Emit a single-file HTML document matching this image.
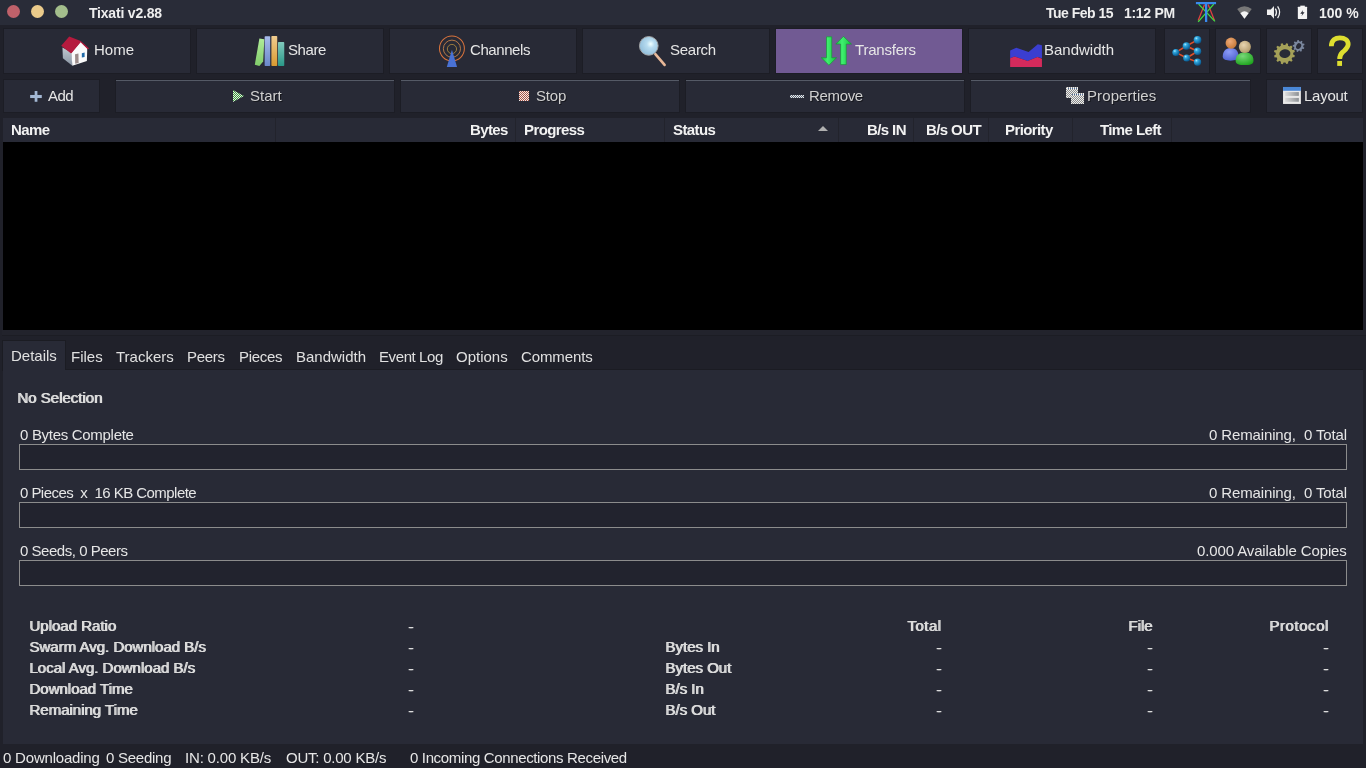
<!DOCTYPE html>
<html><head><meta charset="utf-8">
<style>
*{margin:0;padding:0;box-sizing:border-box}
html,body{width:1366px;height:768px;overflow:hidden;background:#20212a;font-family:"Liberation Sans",sans-serif;color:#e6e6e6}
.a{position:absolute}
.t,.ht,.tab,.st{will-change:transform}
.t{position:absolute;white-space:pre;font-size:15px;line-height:15px}
#title{left:0;top:0;width:1366px;height:25px;background:#292c38}
.btn{position:absolute;background:#282a36;box-shadow:0 0 0 1px #1c1d25}
.btn2{position:absolute;background:#282a36;box-shadow:0 0 0 1px #1c1d25;border-top:1px solid #555a66}
.sel{background:#715a93}
.hdr{position:absolute;left:3px;top:118px;width:1360px;height:24px;background:#282a36}
.sep{position:absolute;top:118px;width:1px;height:24px;background:#22232c}
.ht{position:absolute;top:122px;font-size:15px;line-height:15px;font-weight:bold;color:#f2f2f2;letter-spacing:-0.6px;white-space:pre}
#list{left:3px;top:142px;width:1360px;height:188px;background:#000}
#tabs{left:3px;top:341px;width:1360px;height:29px}
.tab{position:absolute;top:349px;font-size:15px;line-height:15px;color:#e0e0e0;white-space:pre}
#panel{left:3px;top:370px;width:1360px;height:374px;background:#282a36}
.bar{position:absolute;left:19px;width:1328px;height:26px;background:#22232e;border:1px solid #8c8c8c}
.fb{text-shadow:1px 0 0 currentColor;color:#dcdcdc}
.dis{color:#d0d0d0;text-shadow:1px 1px 0 #16171d}
.st{position:absolute;top:750px;font-size:15px;line-height:15px;color:#e6e6e6;white-space:pre}
</style></head><body>
<div id="title" class="a"></div>
<!-- traffic lights -->
<div class="a" style="left:7.4px;top:5.3px;width:13px;height:13px;border-radius:50%;background:#bf616a"></div>
<div class="a" style="left:31.2px;top:5.3px;width:13px;height:13px;border-radius:50%;background:#ebcb8b"></div>
<div class="a" style="left:55.4px;top:5.3px;width:13px;height:13px;border-radius:50%;background:#a3be8c"></div>
<div class="t" style="left:89px;top:6px;font-size:14px;font-weight:bold;letter-spacing:-0.2px;color:#eeeeee">Tixati v2.88</div>
<div class="t" style="left:1046px;top:6px;font-size:14px;font-weight:bold;letter-spacing:-0.5px;color:#eeeeee">Tue Feb 15</div>
<div class="t" style="left:1124px;top:6px;font-size:14px;font-weight:bold;letter-spacing:-0.3px;color:#eeeeee">1:12 PM</div>
<div class="t" style="left:1319px;top:6px;font-size:14px;font-weight:bold;color:#eeeeee">100 %</div>

<!-- row 1 -->
<div class="btn" style="left:4px;top:29px;width:186px;height:44px"></div>
<div class="btn" style="left:197px;top:29px;width:186px;height:44px"></div>
<div class="btn" style="left:390px;top:29px;width:186px;height:44px"></div>
<div class="btn" style="left:583px;top:29px;width:186px;height:44px"></div>
<div class="btn sel" style="left:776px;top:29px;width:186px;height:44px"></div>
<div class="btn" style="left:969px;top:29px;width:186px;height:44px"></div>
<div class="btn" style="left:1165px;top:29px;width:44px;height:44px"></div>
<div class="btn" style="left:1216px;top:29px;width:44px;height:44px"></div>
<div class="btn" style="left:1267px;top:29px;width:44px;height:44px"></div>
<div class="btn" style="left:1318px;top:29px;width:44px;height:44px"></div>
<div class="t" style="left:94px;top:42px">Home</div>
<div class="t" style="left:288px;top:42px;letter-spacing:-0.4px">Share</div>
<div class="t" style="left:470px;top:42px;letter-spacing:-0.42px">Channels</div>
<div class="t" style="left:670px;top:42px;letter-spacing:-0.27px">Search</div>
<div class="t" style="left:855px;top:42px;letter-spacing:-0.22px">Transfers</div>
<div class="t" style="left:1044px;top:42px">Bandwidth</div>

<!-- row 2 -->
<div class="btn" style="left:4px;top:80px;width:95px;height:32px"></div>
<div class="btn2" style="left:116px;top:80px;width:278px;height:32px"></div>
<div class="btn2" style="left:401px;top:80px;width:278px;height:32px"></div>
<div class="btn2" style="left:686px;top:80px;width:278px;height:32px"></div>
<div class="btn2" style="left:971px;top:80px;width:279px;height:32px"></div>
<div class="btn" style="left:1267px;top:80px;width:95px;height:32px"></div>
<div class="t" style="left:48px;top:88px;letter-spacing:-0.5px">Add</div>
<div class="t dis" style="left:250px;top:88px">Start</div>
<div class="t dis" style="left:536px;top:88px;letter-spacing:-0.2px">Stop</div>
<div class="t dis" style="left:809px;top:88px;letter-spacing:-0.33px">Remove</div>
<div class="t dis" style="left:1087px;top:88px;letter-spacing:0.1px">Properties</div>
<div class="t" style="left:1304px;top:88px;letter-spacing:-0.25px">Layout</div>

<svg class="a" style="left:56px;top:32px;width:84px;height:40px" viewBox="0 0 1366 650">
<defs><linearGradient id="hw" x1="0" y1="0" x2="0" y2="1"><stop offset="0" stop-color="#c0c8d0"/><stop offset="1" stop-color="#8a96a4"/></linearGradient></defs>
<polygon points="105,250 255,335 265,548 112,428" fill="url(#hw)"/>
<polygon points="250,335 400,160 508,265 502,472 265,548" fill="#fafafa"/>
<polygon points="85,222 215,72 402,148 540,268 515,280 400,168 255,340 240,345" fill="#b51a3e"/>
<polygon points="310,362 365,350 368,505 312,518" fill="#9c8c8a"/>
<polygon points="420,345 465,335 465,405 420,415" fill="#1f6aa8"/>
</svg>
<svg class="a" style="left:250px;top:32px;width:80px;height:40px" viewBox="0 0 1366 683">
<defs>
<linearGradient id="bg" x1="0" y1="0" x2="0" y2="1"><stop offset="0" stop-color="#b0ec98"/><stop offset="1" stop-color="#80cc6a"/></linearGradient>
<linearGradient id="bb" x1="0" y1="0" x2="0" y2="1"><stop offset="0" stop-color="#a8bcec"/><stop offset="1" stop-color="#6a88c8"/></linearGradient>
<linearGradient id="bo" x1="0" y1="0" x2="0" y2="1"><stop offset="0" stop-color="#f0cc90"/><stop offset="1" stop-color="#d89a30"/></linearGradient>
<linearGradient id="bt" x1="0" y1="0" x2="0" y2="1"><stop offset="0" stop-color="#80c8bc"/><stop offset="1" stop-color="#2a9888"/></linearGradient>
</defs>
<polygon points="160,112 245,125 225,505 160,580 82,560" fill="url(#bg)"/>
<rect x="250" y="72" width="95" height="508" rx="12" fill="url(#bb)"/>
<rect x="365" y="68" width="100" height="512" rx="12" fill="url(#bo)"/>
<rect x="478" y="172" width="107" height="408" rx="12" fill="url(#bt)"/>
</svg>
<svg class="a" style="left:434px;top:32px;width:100px;height:40px" viewBox="0 0 1366 546">
<circle cx="245" cy="225" r="170" fill="none" stroke="#d9733c" stroke-width="14"/>
<circle cx="245" cy="228" r="117" fill="none" stroke="#c8844a" stroke-width="12"/>
<circle cx="245" cy="232" r="63" fill="none" stroke="#b89040" stroke-width="11"/>
<polygon points="245,242 175,478 315,478" fill="#4a72d4"/>
</svg>
<svg class="a" style="left:630px;top:32px;width:90px;height:40px" viewBox="0 0 1366 607">
<defs><radialGradient id="mg" cx="0.6" cy="0.4" r="0.6"><stop offset="0" stop-color="#f0ffff"/><stop offset="0.35" stop-color="#b8dcf0"/><stop offset="1" stop-color="#94c0dc"/></radialGradient></defs>
<line x1="385" y1="335" x2="525" y2="500" stroke="#e8b898" stroke-width="40" stroke-linecap="round"/>
<circle cx="285" cy="210" r="142" fill="url(#mg)" stroke="#a4a4a4" stroke-width="14"/>
</svg>
<svg class="a" style="left:812px;top:32px;width:110px;height:40px" viewBox="0 0 1366 497">
<defs><linearGradient id="ag" x1="0" y1="0" x2="1" y2="0"><stop offset="0" stop-color="#18c040"/><stop offset="0.4" stop-color="#40f070"/><stop offset="1" stop-color="#14c03c"/></linearGradient></defs>
<polygon points="180,60 245,60 245,320 305,320 210,412 115,320 180,320" fill="url(#ag)" stroke="#129a30" stroke-width="8" stroke-linejoin="round"/>
<polygon points="390,55 490,150 425,150 425,405 355,405 355,150 295,150" fill="url(#ag)" stroke="#129a30" stroke-width="8" stroke-linejoin="round"/>
</svg>
<svg class="a" style="left:1004px;top:32px;width:120px;height:40px" viewBox="0 0 1366 455">
<polygon points="70,210 140,178 280,228 385,138 432,152 432,300 380,283 270,330 120,278 70,300" fill="#3a3ed0"/>
<polygon points="70,300 120,278 270,330 380,283 432,305 432,397 70,397" fill="#d42a5c"/>
</svg>
<svg class="a" style="left:1165px;top:29px;width:45px;height:45px" viewBox="0 0 768 768"><defs><radialGradient id="ng" cx="0.35" cy="0.3" r="0.7"><stop offset="0" stop-color="#a8ecff"/><stop offset="0.3" stop-color="#30a8e0"/><stop offset="1" stop-color="#0a5a90"/></radialGradient></defs><line x1="185" y1="400" x2="365" y2="290" stroke="#e0502a" stroke-width="26"/><line x1="185" y1="400" x2="370" y2="495" stroke="#e0502a" stroke-width="26"/><line x1="365" y1="290" x2="555" y2="185" stroke="#e0502a" stroke-width="26"/><line x1="365" y1="290" x2="555" y2="380" stroke="#e0502a" stroke-width="26"/><line x1="370" y1="495" x2="555" y2="380" stroke="#e0502a" stroke-width="26"/><line x1="370" y1="495" x2="555" y2="565" stroke="#e0502a" stroke-width="26"/><circle cx="185" cy="400" r="60" fill="url(#ng)"/><circle cx="365" cy="290" r="64" fill="url(#ng)"/><circle cx="370" cy="495" r="60" fill="url(#ng)"/><circle cx="555" cy="185" r="66" fill="url(#ng)"/><circle cx="555" cy="380" r="63" fill="url(#ng)"/><circle cx="555" cy="565" r="63" fill="url(#ng)"/></svg>
<svg class="a" style="left:1216px;top:29px;width:45px;height:45px" viewBox="0 0 768 768">
<defs>
<radialGradient id="u1" cx="0.4" cy="0.35" r="0.7"><stop offset="0" stop-color="#eeaa78"/><stop offset="1" stop-color="#c47634"/></radialGradient>
<radialGradient id="u2" cx="0.4" cy="0.3" r="0.8"><stop offset="0" stop-color="#8c9cf8"/><stop offset="1" stop-color="#4a5ccc"/></radialGradient>
<radialGradient id="u3" cx="0.4" cy="0.35" r="0.7"><stop offset="0" stop-color="#e8d4b0"/><stop offset="1" stop-color="#b09868"/></radialGradient>
<radialGradient id="u4" cx="0.4" cy="0.3" r="0.8"><stop offset="0" stop-color="#78d878"/><stop offset="1" stop-color="#18a018"/></radialGradient>
</defs>
<path d="M115,470 C115,360 190,325 250,325 C320,325 385,360 385,470 C385,520 330,540 250,540 C170,540 115,520 115,470Z" fill="url(#u2)"/>
<circle cx="258" cy="240" r="95" fill="url(#u1)"/>
<path d="M335,540 C335,440 420,398 490,398 C570,398 640,440 640,540 C640,600 580,615 490,615 C400,615 335,600 335,540Z" fill="url(#u4)"/>
<circle cx="493" cy="305" r="103" fill="url(#u3)"/>
</svg>
<svg class="a" style="left:1267px;top:29px;width:45px;height:45px" viewBox="0 0 768 768"><polygon points="618.4,305.9 637.9,318.6 627.7,342.0 605.2,336.4 589.8,352.6 596.7,374.8 573.8,386.2 560.1,367.4 538.0,370.0 528.9,391.4 504.0,385.4 505.6,362.2 487.0,350.0 466.3,360.5 451.1,340.0 467.2,323.2 460.9,301.9 438.2,296.7 439.8,271.1 462.9,268.7 471.8,248.2 457.8,229.7 475.3,211.1 494.6,224.1 514.6,214.2 515.8,190.9 541.2,188.0 547.6,210.4 569.3,215.5 585.1,198.5 606.5,212.6 597.0,233.9 610.3,251.8 633.4,248.9 640.6,273.4 619.7,283.7" fill="#7a879e"/><ellipse cx="540" cy="292" rx="40" ry="52" transform="rotate(30 540 292)" fill="#282a36"/><polygon points="447.3,437.0 475.6,451.2 467.0,483.9 435.3,482.4 419.8,509.6 437.2,536.1 413.4,560.1 386.7,542.9 359.7,558.7 361.5,590.4 328.9,599.3 314.4,571.1 283.0,571.3 268.8,599.6 236.1,591.0 237.6,559.3 210.4,543.8 183.9,561.2 159.9,537.4 177.1,510.7 161.3,483.7 129.6,485.5 120.7,452.9 148.9,438.4 148.7,407.0 120.4,392.8 129.0,360.1 160.7,361.6 176.2,334.4 158.8,307.9 182.6,283.9 209.3,301.1 236.3,285.3 234.5,253.6 267.1,244.7 281.6,272.9 313.0,272.7 327.2,244.4 359.9,253.0 358.4,284.7 385.6,300.2 412.1,282.8 436.1,306.6 418.9,333.3 434.7,360.3 466.4,358.5 475.3,391.1 447.1,405.6" fill="#a4a058"/><ellipse cx="305" cy="420" rx="95" ry="74" transform="rotate(-10 305 420)" fill="#282a36"/></svg>
<svg class="a" style="left:1318px;top:29px;width:45px;height:45px" viewBox="0 0 768 768">
<path d="M228,295 C228,185 300,150 372,150 C460,150 515,200 515,262 C515,330 455,362 418,398 C385,430 370,450 370,512" fill="none" stroke="#dede30" stroke-width="82"/>
<rect x="328" y="545" width="82" height="85" fill="#dede30"/>
</svg>
<svg class="a" style="left:24px;top:82px;width:60px;height:28px" viewBox="0 0 1366 637">
<rect x="140" y="295" width="265" height="70" fill="#a4b8d4"/>
<rect x="243" y="205" width="62" height="245" fill="#a4b8d4"/>
</svg>
<svg class="a" style="left:1276px;top:82px;width:80px;height:28px" viewBox="0 0 1366 478">
<defs><linearGradient id="lg" x1="0" y1="0" x2="1" y2="0"><stop offset="0" stop-color="#dcdcdc"/><stop offset="1" stop-color="#8c9094"/></linearGradient></defs>
<rect x="120" y="85" width="305" height="290" fill="#e8e8e8"/>
<rect x="120" y="85" width="305" height="65" fill="#4a88d8"/>
<rect x="155" y="172" width="235" height="65" fill="url(#lg)"/>
<rect x="155" y="272" width="235" height="65" fill="url(#lg)"/>
</svg>
<svg class="a" style="left:1190px;top:0px;width:124px;height:26px" viewBox="0 0 1366 286">
<line x1="90" y1="225" x2="160" y2="50" stroke="#e04040" stroke-width="14"/>
<line x1="200" y1="50" x2="270" y2="225" stroke="#e04040" stroke-width="14"/>
<line x1="90" y1="240" x2="262" y2="45" stroke="#40e040" stroke-width="14"/>
<line x1="95" y1="45" x2="275" y2="235" stroke="#40e040" stroke-width="14"/>
<rect x="65" y="22" width="222" height="24" fill="#3a8cf0"/>
<rect x="165" y="40" width="25" height="202" fill="#3a8cf0"/>
<path d="M520,100 Q600,40 680,100 L600,205 Z" fill="#777"/>
<path d="M555,145 Q600,105 645,145 L600,205 Z" fill="#f4f4f4"/>
<polygon points="848,105 890,105 925,65 925,205 890,165 848,165" fill="#f0f0f0"/>
<path d="M940,95 Q965,135 940,175" fill="none" stroke="#f0f0f0" stroke-width="16"/>
<path d="M965,70 Q1010,135 965,200" fill="none" stroke="#f0f0f0" stroke-width="14"/>
<rect x="1188" y="75" width="102" height="133" rx="6" fill="#f4f4f4"/>
<rect x="1215" y="62" width="50" height="16" fill="#f4f4f4"/>
<polygon points="1245,110 1215,150 1238,150 1228,180 1262,135 1240,135" fill="#282a35"/>
</svg>
<div class="a" style="left:233px;top:90px;width:11px;height:12px;clip-path:polygon(0 0,100% 50%,0 100%);background:repeating-conic-gradient(#e4ece4 0 25%,#3c9c3c 0 50%) 0 0/2px 2px"></div>
<div class="a" style="left:519px;top:91px;width:10px;height:10px;background:repeating-conic-gradient(#f0ecec 0 25%,#a85444 0 50%) 0 0/2px 2px"></div>
<div class="a" style="left:790px;top:95px;width:14px;height:3px;background:repeating-conic-gradient(#e8e8e8 0 25%,#5a6676 0 50%) 0 0/2px 2px"></div>
<div class="a" style="left:1066px;top:87px;width:12px;height:11px;background:repeating-conic-gradient(#eeeeee 0 25%,#8c8c8c 0 50%) 0 0/2px 2px"></div>
<div class="a" style="left:1071px;top:93px;width:13px;height:11px;background:repeating-conic-gradient(#eeeeee 0 25%,#8c8c8c 0 50%) 1px 0/2px 2px"></div>
<div class="a" style="left:1067px;top:88px;width:11px;height:1px;background:repeating-conic-gradient(#eeeeee 0 25%,#4a6a98 0 50%) 1px 0/2px 2px"></div>
<div class="a" style="left:1072px;top:94px;width:12px;height:1px;background:repeating-conic-gradient(#eeeeee 0 25%,#4a6a98 0 50%) 0 0/2px 2px"></div>
<!-- header -->
<div class="hdr"></div>
<div class="sep" style="left:275px"></div>
<div class="sep" style="left:515px"></div>
<div class="sep" style="left:664px"></div>
<div class="sep" style="left:838px"></div>
<div class="sep" style="left:913px"></div>
<div class="sep" style="left:988px"></div>
<div class="sep" style="left:1072px"></div>
<div class="sep" style="left:1171px"></div>
<div class="ht" style="left:11px">Name</div>
<div class="ht" style="left:470px">Bytes</div>
<div class="ht" style="left:524px">Progress</div>
<div class="ht" style="left:673px">Status</div>
<div class="ht" style="left:867px">B/s IN</div>
<div class="ht" style="left:926px">B/s OUT</div>
<div class="ht" style="left:1005px">Priority</div>
<div class="ht" style="left:1100px">Time Left</div>
<div class="a" style="left:818px;top:126px;width:0;height:0;border-left:5px solid transparent;border-right:5px solid transparent;border-bottom:5px solid #b0b0b0"></div>

<div id="list" class="a"></div>
<div class="a" style="left:2px;top:330px;width:1364px;height:5px;background:#22232c"></div><div class="a" style="left:2px;top:335px;width:1364px;height:1px;background:#1c1d24"></div>

<!-- tabs -->
<div class="a" style="left:65px;top:369px;width:1298px;height:1px;background:#1b1c23"></div>
<div class="a" style="left:3px;top:341px;width:62px;height:29px;background:#282a36;box-shadow:0 0 0 1px #1b1c23"></div>
<div class="tab" style="left:11px;top:348px">Details</div>
<div class="tab" style="left:71px">Files</div>
<div class="tab" style="left:116px">Trackers</div>
<div class="tab" style="left:187px;letter-spacing:-0.28px">Peers</div>
<div class="tab" style="left:239px;letter-spacing:-0.3px">Pieces</div>
<div class="tab" style="left:296px">Bandwidth</div>
<div class="tab" style="left:379px;letter-spacing:-0.4px">Event Log</div>
<div class="tab" style="left:456px">Options</div>
<div class="tab" style="left:521px;letter-spacing:-0.1px">Comments</div>

<div id="panel" class="a"></div>
<div class="t fb" style="left:17px;top:390px">No Selection</div>
<div class="t" style="left:20px;top:427px;letter-spacing:-0.3px">0 Bytes Complete</div>
<div class="t" style="right:19px;top:427px;text-align:right;letter-spacing:-0.13px">0 Remaining,  0 Total</div>
<div class="bar" style="top:444px"></div>
<div class="t" style="left:20px;top:485px;letter-spacing:-0.55px">0 Pieces  x  16 KB Complete</div>
<div class="t" style="right:19px;top:485px;text-align:right;letter-spacing:-0.13px">0 Remaining,  0 Total</div>
<div class="bar" style="top:502px"></div>
<div class="t" style="left:20px;top:543px;letter-spacing:-0.47px">0 Seeds, 0 Peers</div>
<div class="t" style="right:19px;top:543px;text-align:right;letter-spacing:-0.12px">0.000 Available Copies</div>
<div class="bar" style="top:560px"></div>

<div class="t fb" style="left:29px;top:618px">Upload Ratio</div>
<div class="t fb" style="left:29px;top:639px">Swarm Avg. Download B/s</div>
<div class="t fb" style="left:29px;top:660px">Local Avg. Download B/s</div>
<div class="t fb" style="left:29px;top:681px">Download Time</div>
<div class="t fb" style="left:29px;top:702px">Remaining Time</div>

<div class="t fb" style="left:408px;top:619px">-</div>
<div class="t fb" style="left:408px;top:640px">-</div>
<div class="t fb" style="left:408px;top:661px">-</div>
<div class="t fb" style="left:408px;top:682px">-</div>
<div class="t fb" style="left:408px;top:703px">-</div>
<div class="t fb" style="left:665px;top:639px">Bytes In</div>
<div class="t fb" style="left:665px;top:660px">Bytes Out</div>
<div class="t fb" style="left:665px;top:681px">B/s In</div>
<div class="t fb" style="left:665px;top:702px">B/s Out</div>
<div class="t fb" style="right:425px;top:618px;letter-spacing:0.5px">Total</div>
<div class="t fb" style="right:214px;top:618px">File</div>
<div class="t fb" style="right:38px;top:618px;letter-spacing:0.55px">Protocol</div>
<div class="t fb" style="right:425px;top:640px">-</div>
<div class="t fb" style="right:214px;top:640px">-</div>
<div class="t fb" style="right:38px;top:640px">-</div>
<div class="t fb" style="right:425px;top:661px">-</div>
<div class="t fb" style="right:214px;top:661px">-</div>
<div class="t fb" style="right:38px;top:661px">-</div>
<div class="t fb" style="right:425px;top:682px">-</div>
<div class="t fb" style="right:214px;top:682px">-</div>
<div class="t fb" style="right:38px;top:682px">-</div>
<div class="t fb" style="right:425px;top:703px">-</div>
<div class="t fb" style="right:214px;top:703px">-</div>
<div class="t fb" style="right:38px;top:703px">-</div>

<div class="st" style="left:3px;letter-spacing:-0.2px">0 Downloading</div><div class="st" style="left:106px;letter-spacing:-0.25px">0 Seeding</div>
<div class="st" style="left:185px;letter-spacing:-0.18px">IN: 0.00 KB/s</div>
<div class="st" style="left:286px;letter-spacing:-0.23px">OUT: 0.00 KB/s</div>
<div class="st" style="left:410px;letter-spacing:-0.35px">0 Incoming Connections Received</div>
</body></html>
